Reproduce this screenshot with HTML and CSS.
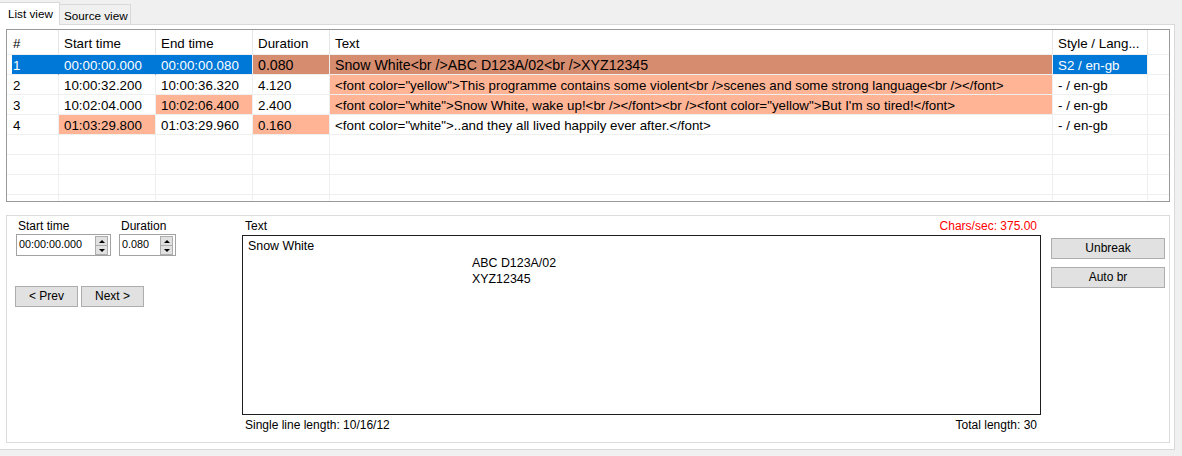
FILE: index.html
```html
<!DOCTYPE html>
<html lang="en">
<head>
  <meta charset="UTF-8">
  <meta name="viewport" content="width=device-width, initial-scale=1">
  <title>Subtitle list</title>
  <link rel="stylesheet" href="styles.css">
</head>
<body>
  <div class="tabs">
    <div class="tab active">List view</div>
    <div class="tab">Source view</div>
  </div>

  <div class="page">
    <!-- Subtitle list -->
    <div class="listview">
      <div class="grid">
        <div class="row head">
          <div>#</div><div>Start time</div><div>End time</div><div>Duration</div><div>Text</div><div>Style / Lang...</div><div></div>
        </div>
        <div class="row selected">
          <div>1</div>
          <div>00:00:00.000</div>
          <div>00:00:00.080</div>
          <div class="warn big">0.080</div>
          <div class="warn big">Snow White&lt;br /&gt;ABC D123A/02&lt;br /&gt;XYZ12345</div>
          <div>S2 / en-gb</div>
          <div></div>
        </div>
        <div class="row">
          <div>2</div>
          <div>10:00:32.200</div>
          <div>10:00:36.320</div>
          <div>4.120</div>
          <div class="warn">&lt;font color="yellow"&gt;This programme contains some violent&lt;br /&gt;scenes and some strong language&lt;br /&gt;&lt;/font&gt;</div>
          <div>- / en-gb</div>
          <div></div>
        </div>
        <div class="row">
          <div>3</div>
          <div>10:02:04.000</div>
          <div class="warn">10:02:06.400</div>
          <div>2.400</div>
          <div class="warn">&lt;font color="white"&gt;Snow White, wake up!&lt;br /&gt;&lt;/font&gt;&lt;br /&gt;&lt;font color="yellow"&gt;But I'm so tired!&lt;/font&gt;</div>
          <div>- / en-gb</div>
          <div></div>
        </div>
        <div class="row">
          <div>4</div>
          <div class="warn">01:03:29.800</div>
          <div>01:03:29.960</div>
          <div class="warn">0.160</div>
          <div>&lt;font color="white"&gt;..and they all lived happily ever after.&lt;/font&gt;</div>
          <div>- / en-gb</div>
          <div></div>
        </div>
        <!-- leere Zeilen -->
        <div class="row"><div></div><div></div><div></div><div></div><div></div><div></div><div></div></div>
        <div class="row"><div></div><div></div><div></div><div></div><div></div><div></div><div></div></div>
        <div class="row"><div></div><div></div><div></div><div></div><div></div><div></div><div></div></div>
        <div class="row"><div></div><div></div><div></div><div></div><div></div><div></div><div></div></div>
      </div>
    </div>

    <!-- Editor -->
    <div class="groupbox">
      <div class="side">
        <div class="fields">
          <div class="field">
            <label>Start time</label>
            <div class="spin wide">
              <span class="spin-value">00:00:00.000</span>
              <span class="spin-btns"><span class="up"></span><span class="down"></span></span>
            </div>
          </div>
          <div class="field">
            <label>Duration</label>
            <div class="spin narrow">
              <span class="spin-value">0.080</span>
              <span class="spin-btns"><span class="up"></span><span class="down"></span></span>
            </div>
          </div>
        </div>
        <div class="nav">
          <button class="btn">&lt; Prev</button>
          <button class="btn">Next &gt;</button>
        </div>
      </div>

      <div class="editor">
        <div class="editor-head">
          <span>Text</span>
          <span class="cps">Chars/sec: 375.00</span>
        </div>
        <div class="textbox">
          <div>Snow White</div>
          <div class="indent">ABC D123A/02</div>
          <div class="indent">XYZ12345</div>
        </div>
        <div class="editor-foot">
          <span>Single line length: 10/16/12</span>
          <span>Total length: 30</span>
        </div>
      </div>

      <div class="actions">
        <button class="btn">Unbreak</button>
        <button class="btn">Auto br</button>
      </div>
    </div>
  </div>
</body>
</html>
```

FILE: styles.css
```css
/* Windows-artige Oberfläche */
:root {
  --window: #f0f0f0;
  --line: #d9d9d9;
  --grid: #efefef;
  --select: #0078d7;
  --warn: #ffb496;
  --warn-select: #d68c6f;
  --button: #e1e1e1;
  --button-border: #adadad;
}

* {
  margin: 0;
  padding: 0;
  box-sizing: border-box;
}

body {
  background-color: var(--window);
  color: #000;
  font-family: "Liberation Sans", Arial, sans-serif;
  font-size: 12px;
  width: 1182px;
  height: 456px;
  overflow: hidden;
}

/* Tabs */
.tabs {
  display: flex;
  align-items: flex-end;
  height: 24px;
}

.tab {
  width: 71px;
  height: 20px;
  padding: 3px 0 0 4px;
  border: 1px solid var(--line);
  border-left: none;
  border-bottom: none;
  font-size: 11.7px;
  line-height: 15px;
  white-space: nowrap;
}

.tab.active {
  position: relative;
  z-index: 1;
  width: 60px;
  height: 23px;
  margin-bottom: -1px;
  padding-left: 8px;
  background-color: #fff;
}

.page {
  width: 1176px;
  height: 426px;
  margin-left: -1px;
  padding: 4px 4px 0 6px;
  border: 1px solid var(--line);
  background-color: #fff;
}

/* Liste */
.listview {
  height: 173px;
  border: 1px solid #9a9a9a;
  background-color: #fff;
  overflow: hidden;
  font-size: 13.33px;
}

.grid {
  display: grid;
  grid-template-columns: 52px 97px 97px 77px 723px 95px 1fr;
}

.row {
  display: contents;
}

.row > div {
  height: 20px;
  padding: 2px 0 0 5px;
  border-right: 1px solid var(--grid);
  border-bottom: 1px solid var(--grid);
  line-height: 17px;
  white-space: nowrap;
  overflow: hidden;
}

.row > div:first-child {
  padding-left: 6px;
}

.row > div:last-child {
  border-right: none;
}

.row.head > div {
  height: 25px;
  padding-top: 3px;
  line-height: 21px;
  border-right-color: #e6e6e6;
}

.warn {
  background-color: var(--warn);
}

.big {
  font-size: 14.2px;
}

.row.selected > div {
  background-color: var(--select);
  color: #fff;
}

.row.selected > div:first-child {
  background: linear-gradient(to right, #fff 5px, var(--select) 5px);
}

.row.selected > div:nth-child(-n+2) {
  border-right-color: var(--select);
}

.row.selected > .warn {
  background-color: var(--warn-select);
  color: #000;
}

.row.selected > div:last-child {
  background-color: #fff;
}

/* Editor-Bereich */
.groupbox {
  display: flex;
  height: 228px;
  margin-top: 13px;
  padding: 3px 4px 0 8px;
  border: 1px solid #dcdcdc;
}

.side {
  width: 227px;
}

.fields {
  display: flex;
  gap: 8px;
  margin-left: 1px;
}

.field label {
  display: block;
  height: 15px;
  padding-left: 2px;
  line-height: 14px;
}

.spin {
  display: flex;
  align-items: flex-start;
  height: 22px;
  border: 1px solid #a2a2a2;
}

.spin.wide {
  width: 95px;
}

.spin.narrow {
  width: 57px;
}

.spin-value {
  flex: 1;
  padding-left: 2px;
  font-size: 10.8px;
  line-height: 19px;
}

.spin-btns {
  display: flex;
  flex-direction: column;
  width: 13px;
  margin: 1px 2px 0 0;
}

.spin-btns span {
  display: flex;
  align-items: center;
  justify-content: center;
  height: 10px;
  background-color: var(--button);
  border: 1px solid var(--button-border);
}

.spin-btns span + span {
  margin-top: -1px;
}

.spin-btns .up::after,
.spin-btns .down::after {
  content: "";
  border-left: 3px solid transparent;
  border-right: 3px solid transparent;
}

.spin-btns .up::after {
  border-bottom: 3px solid #000;
}

.spin-btns .down::after {
  border-top: 3px solid #000;
}

.btn {
  height: 21px;
  background-color: var(--button);
  border: 1px solid var(--button-border);
  font-family: inherit;
  font-size: 12px;
  line-height: 19px;
  color: #000;
}

.nav {
  display: flex;
  gap: 3px;
  margin-top: 30px;
}

.nav .btn {
  width: 63px;
}

.editor {
  display: flex;
  flex-direction: column;
  width: 799px;
}

.editor-head,
.editor-foot {
  display: flex;
  justify-content: space-between;
  padding: 0 4px 0 3px;
  line-height: 14px;
}

.editor-head {
  height: 16px;
}

.cps {
  color: #ff0000;
}

.textbox {
  height: 180px;
  padding: 2px 5px;
  border: 1px solid #1e1e1e;
  font-size: 12.4px;
  line-height: 16.7px;
}

.textbox .indent {
  margin-left: 224px;
}

.editor-foot {
  margin-top: 3px;
}

.actions {
  display: flex;
  flex-direction: column;
  gap: 8px;
  width: 114px;
  margin-left: 10px;
  padding-top: 19px;
}
```
